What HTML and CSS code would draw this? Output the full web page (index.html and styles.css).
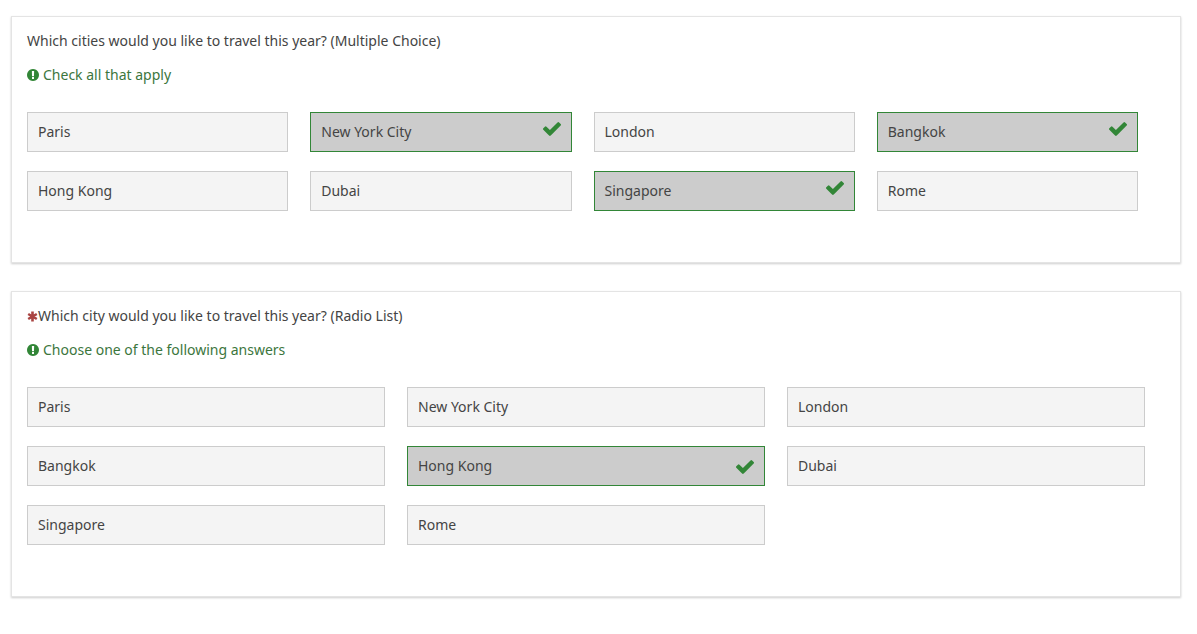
FILE: index.html
```html
<!DOCTYPE html>
<html lang="en">

<head>
  <meta charset="utf-8">
  <meta name="viewport" content="width=device-width, initial-scale=1">
  <title>Survey</title>
  <link rel="stylesheet" href="styles.css">
</head>

<body>
  <!-- shared icons -->
  <svg class="sprite" aria-hidden="true">
    <symbol id="icon-check" viewBox="121 334 1550 1188">
      <path d="M1671 566q0 40-28 68l-724 724-136 136q-28 28-68 28t-68-28l-136-136-362-362q-28-28-28-68t28-68l136-136q28-28 68-28t68 28l294 295 656-657q28-28 68-28t68 28l136 136q28 28 28 68z"/>
    </symbol>
    <symbol id="icon-info" viewBox="128 128 1536 1536">
      <path d="M896 128q209 0 385.5 103t279.5 279.5 103 385.5-103 385.5-279.5 279.5-385.5 103-385.5-103-279.5-279.5-103-385.5 103-385.5 279.5-279.5 385.5-103zm128 1247v-190q0-14-9-23.5t-22-9.5h-192q-13 0-23 10t-10 23v190q0 13 10 23t23 10h192q13 0 22-9.5t9-23.5zm-2-344l18-621q0-12-10-18-10-8-24-8h-220q-14 0-24 8-10 6-10 18l17 621q0 10 10 17.5t24 7.5h185q14 0 23.5-7.5t10.5-17.5z"/>
    </symbol>
    <symbol id="icon-asterisk" viewBox="0 0 11 11">
      <path d="M5.5 .5v10M1.2 3l8.6 5M1.2 8l8.6-5" fill="none" stroke="currentColor" stroke-width="2.6"/>
    </symbol>
  </svg>

  <form class="survey">
    <section class="question" role="group" aria-labelledby="q1-text">
      <div class="question-text" id="q1-text">Which cities would you like to travel this year? (Multiple Choice)</div>
      <div class="question-help"><svg class="icon-info"><use href="#icon-info"/></svg>Check all that apply</div>
      <div class="answers answers-multiple">
        <label class="answer"><input type="checkbox" name="cities" value="paris"><span class="answer-box">Paris<svg class="icon-check"><use href="#icon-check"/></svg></span></label>
        <label class="answer"><input type="checkbox" name="cities" value="newyork" checked><span class="answer-box">New York City<svg class="icon-check"><use href="#icon-check"/></svg></span></label>
        <label class="answer"><input type="checkbox" name="cities" value="london"><span class="answer-box">London<svg class="icon-check"><use href="#icon-check"/></svg></span></label>
        <label class="answer"><input type="checkbox" name="cities" value="bangkok" checked><span class="answer-box">Bangkok<svg class="icon-check"><use href="#icon-check"/></svg></span></label>
        <label class="answer"><input type="checkbox" name="cities" value="hongkong"><span class="answer-box">Hong Kong<svg class="icon-check"><use href="#icon-check"/></svg></span></label>
        <label class="answer"><input type="checkbox" name="cities" value="dubai"><span class="answer-box">Dubai<svg class="icon-check"><use href="#icon-check"/></svg></span></label>
        <label class="answer"><input type="checkbox" name="cities" value="singapore" checked><span class="answer-box">Singapore<svg class="icon-check"><use href="#icon-check"/></svg></span></label>
        <label class="answer"><input type="checkbox" name="cities" value="rome"><span class="answer-box">Rome<svg class="icon-check"><use href="#icon-check"/></svg></span></label>
      </div>
    </section>

    <section class="question" role="radiogroup" aria-labelledby="q2-text">
      <div class="question-text" id="q2-text"><svg class="icon-asterisk"><use href="#icon-asterisk"/></svg>Which city would you like to travel this year? (Radio List)</div>
      <div class="question-help"><svg class="icon-info"><use href="#icon-info"/></svg>Choose one of the following answers</div>
      <div class="answers answers-radio">
        <label class="answer"><input type="radio" name="city" value="paris"><span class="answer-box">Paris<svg class="icon-check"><use href="#icon-check"/></svg></span></label>
        <label class="answer"><input type="radio" name="city" value="newyork"><span class="answer-box">New York City<svg class="icon-check"><use href="#icon-check"/></svg></span></label>
        <label class="answer"><input type="radio" name="city" value="london"><span class="answer-box">London<svg class="icon-check"><use href="#icon-check"/></svg></span></label>
        <label class="answer"><input type="radio" name="city" value="bangkok"><span class="answer-box">Bangkok<svg class="icon-check"><use href="#icon-check"/></svg></span></label>
        <label class="answer"><input type="radio" name="city" value="hongkong" checked><span class="answer-box">Hong Kong<svg class="icon-check"><use href="#icon-check"/></svg></span></label>
        <label class="answer"><input type="radio" name="city" value="dubai"><span class="answer-box">Dubai<svg class="icon-check"><use href="#icon-check"/></svg></span></label>
        <label class="answer"><input type="radio" name="city" value="singapore"><span class="answer-box">Singapore<svg class="icon-check"><use href="#icon-check"/></svg></span></label>
        <label class="answer"><input type="radio" name="city" value="rome"><span class="answer-box">Rome<svg class="icon-check"><use href="#icon-check"/></svg></span></label>
      </div>
    </section>
  </form>
</body>

</html>
```
FILE: styles.css
```css
* {
  box-sizing: border-box;
}

body {
  margin: 0;
  font: 14px/20px "Noto Sans", "Open Sans", sans-serif;
  color: #444;
  background-color: #fff;
}

.sprite {
  display: none;
}
/* question */

.survey {
  display: flex;
  flex-direction: column;
  gap: 28px;
  padding: 16px 16px 16px 11px;
}

.question {
  padding: 14px 15px 51px;
  border: 1px solid #e4e4e4;
  box-shadow: 0 1px 2px rgba(0, 0, 0, .2);
}

.question-text,
.question-help {
  display: flex;
  align-items: center;
}

.question-help {
  gap: 4px;
  margin-top: 14px;
  color: #3c763d;
}

.icon-info {
  width: 12px;
  height: 12px;
  fill: #328637;
}

.icon-asterisk {
  width: 11px;
  height: 11px;
  color: #a94442;
}
/* answers */

.answers {
  display: grid;
  gap: 19px 22px;
  margin-top: 27px;
}

.answers-multiple {
  grid-template-columns: repeat(4, 1fr);
  padding-right: 27px;
}

.answers-radio {
  grid-template-columns: repeat(3, 1fr);
  padding-right: 20px;
}

.answer {
  position: relative;
  cursor: pointer;
}

.answer input {
  position: absolute;
  inset: 0;
  width: 100%;
  height: 100%;
  margin: 0;
  appearance: none;
  cursor: pointer;
}

.answer-box {
  display: flex;
  align-items: center;
  justify-content: space-between;
  height: 40px;
  padding: 0 10px;
  border: 1px solid #ccc;
  background-color: #f4f4f4;
}

.icon-check {
  display: none;
  width: 18px;
  height: 14px;
  fill: #328637;
}

.answers-multiple .icon-check {
  margin-bottom: 6px;
}

.answers-radio .icon-check {
  margin-top: 2px;
}

.answer input:checked + .answer-box {
  border-color: #328637;
  background-color: #ccc;
}

.answer input:checked + .answer-box .icon-check {
  display: block;
}
```
